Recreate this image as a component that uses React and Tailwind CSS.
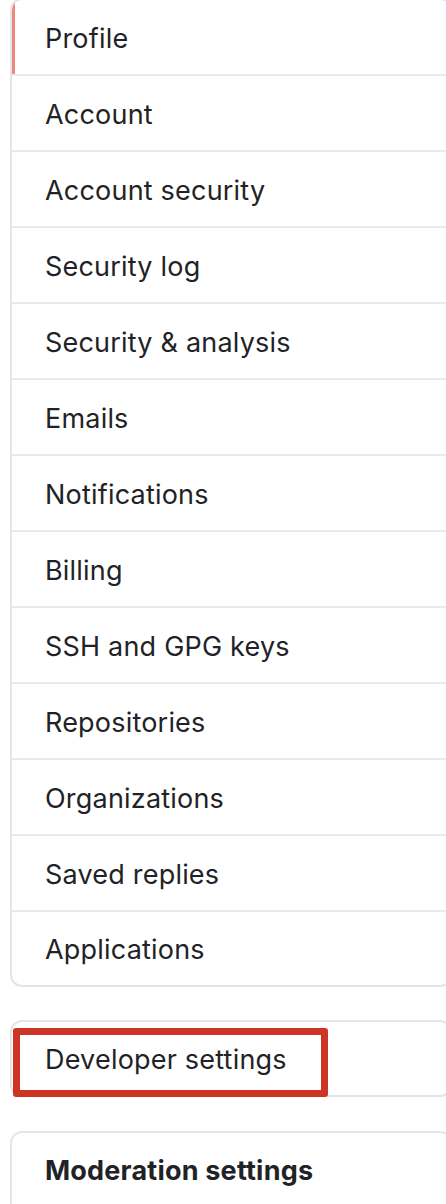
import React from 'react';

const items = [
  'Profile',
  'Account',
  'Account security',
  'Security log',
  'Security & analysis',
  'Emails',
  'Notifications',
  'Billing',
  'SSH and GPG keys',
  'Repositories',
  'Organizations',
  'Saved replies',
  'Applications',
];

export default function App() {
  return (
    <div
      className="w-[446px] h-[1204px] overflow-hidden bg-white text-[#1f2328] tracking-[0.2px]"
      style={{ fontFamily: 'Inter, "Liberation Sans", Arial, sans-serif' }}
    >
      <div className="relative pl-[10px]">
        {/* main settings menu */}
        <div className="w-[442px] -mt-[2px] border-2 border-[#e4e5e8] rounded-[12px] overflow-hidden">
          {items.map((label, i) => (
            <div
              key={label}
              className={`relative flex items-center pl-[33px] pt-[4px] text-[27px] ${
                i < items.length - 1 ? 'h-[76px] border-b-2 border-[#e9eaed]' : 'h-[73px]'
              }`}
            >
              {i === 0 && <span className="absolute left-0 top-0 bottom-0 w-[3px] bg-[#f0877c]" />}
              {label}
            </div>
          ))}
        </div>

        <div className="w-[442px] mt-[33px] h-[77px] border-2 border-[#e4e5e8] rounded-[12px] flex items-center pl-[33px] pt-[4px] text-[27px]">
          Developer settings
        </div>

        <div className="w-[442px] mt-[34px] h-[110px] border-2 border-[#e4e5e8] rounded-[12px] pl-[33px] pt-[18px] text-[27px] font-bold">
          Moderation settings
        </div>

        {/* annotation box */}
        <div className="absolute left-[13px] top-[1030px] w-[315px] h-[69px] border-[7px] border-[#cc3526] rounded-[3px]" />
      </div>
    </div>
  );
}
